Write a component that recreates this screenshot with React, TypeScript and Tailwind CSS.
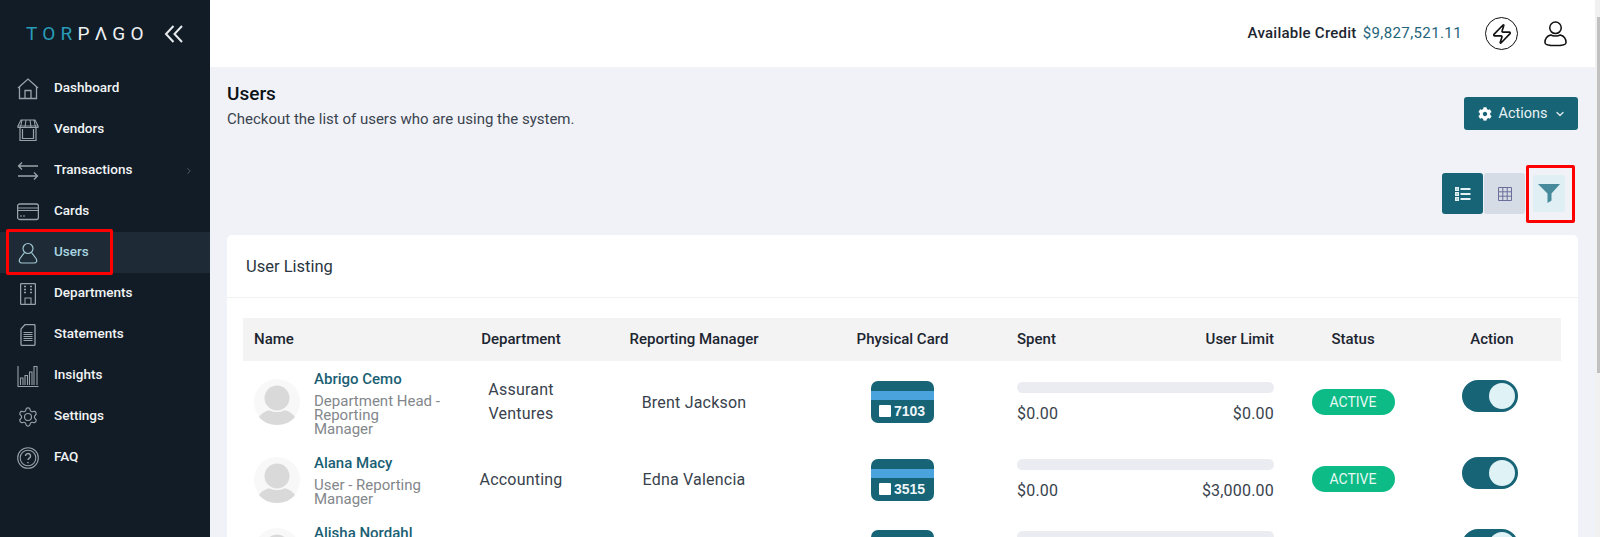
import React from "react";
import { ChevronDown, ChevronRight, Zap } from "lucide-react";
import { FaCog } from "react-icons/fa";

const ic = { fill: "none", stroke: "#98a2a9", strokeWidth: 1.1 } as const;

const icons: Record<string, React.ReactNode> = {
  Dashboard: (
    <svg width="22" height="22" viewBox="0 0 22 22" {...ic}>
      <path d="M1 10 11 1l10 9M2.500 9v11.500h17V9" strokeWidth="1.300" />
      <path d="M8 20.500v-8h6v8" strokeWidth="1.300" />
    </svg>
  ),
  Vendors: (
    <svg width="22" height="22" viewBox="0 0 22 22" {...ic}>
      <path d="M4 1h14l3 6H1zM1 7v1.500h20V7M5 1 3.500 8M9 1 8 8M13 1l1 7M17 1l1.500 7" />
      <path d="M3 9v12.500h16V9M5.500 10v9.500h11V10" strokeWidth="1.200" />
    </svg>
  ),
  Transactions: (
    <svg width="22" height="22" viewBox="0 0 22 22" {...ic}>
      <path d="M21 6H1.500M5 2.500 1.500 6 5 9.500M1 16h19.500M17 12.500l3.500 3.500-3.500 3.500" strokeWidth="1.300" />
    </svg>
  ),
  Cards: (
    <svg width="22" height="18" viewBox="0 0 22 18" {...ic}>
      <rect x="0.600" y="1" width="20.800" height="15.500" rx="2" strokeWidth="1.300" />
      <path d="M1 5h20M1 7.500h20M3 13h2M6 13h2" />
    </svg>
  ),
  Users: (
    <svg width="20" height="22" viewBox="0 0 20 22" fill="none" stroke="#9fc6d2" strokeWidth="1.200">
      <circle cx="10" cy="6.500" r="5" />
      <path d="M6.500 10.500 2 16.500C.5 19 1.500 21 4 21h12c2.500 0 3.500-2 2-4.500l-4.500-6" />
    </svg>
  ),
  Departments: (
    <svg width="16" height="22" viewBox="0 0 16 22" {...ic}>
      <rect x="0.600" y="0.600" width="14.800" height="20.800" rx="1" strokeWidth="1.300" />
      <path d="M4 3.500h2M4 6.500h2M4 9.500h2M10 3.500h2M10 6.500h2M10 9.500h2" strokeWidth="1.400" />
      <path d="M5 21v-6h6v6" />
    </svg>
  ),
  Statements: (
    <svg width="16" height="22" viewBox="0 0 16 22" {...ic}>
      <path d="M5 .6h9a1 1 0 0 1 1 1V20.400a1 1 0 0 1-1 1H2a1 1 0 0 1-1-1V5z" strokeWidth="1.300" />
      <path d="M3.500 8.500h9M3.500 10.500h9M3.500 12.500h9M3.500 14.500h9M3.500 16.500h9" strokeWidth="1" />
    </svg>
  ),
  Insights: (
    <svg width="22" height="22" viewBox="0 0 22 22" {...ic}>
      <path d="M1 1v20.500h20.500" />
      <path d="M3.500 20v-7h2.500v7M8 20v-9.500h2.500V20M12.500 20V7h2.500v13M17 20V1.500h3V20" />
    </svg>
  ),
  Settings: (
    <svg width="22" height="22" viewBox="0 0 24 24" fill="none" stroke="#98a2a9" strokeWidth="1.300">
      <path d="M9.671 4.136a2.340 2.340 0 0 1 4.659 0 2.340 2.340 0 0 0 3.319 1.915 2.340 2.340 0 0 1 2.330 4.033 2.340 2.340 0 0 0 0 3.831 2.340 2.340 0 0 1-2.330 4.033 2.340 2.340 0 0 0-3.319 1.915 2.340 2.340 0 0 1-4.659 0 2.340 2.340 0 0 0-3.320-1.915 2.340 2.340 0 0 1-2.330-4.033 2.340 2.340 0 0 0 0-3.831A2.340 2.340 0 0 1 6.350 6.051a2.340 2.340 0 0 0 3.319-1.915" />
      <circle cx="12" cy="12" r="3.800" />
    </svg>
  ),
  FAQ: (
    <svg width="22" height="22" viewBox="0 0 22 22" fill="none" stroke="#98a2a9" strokeWidth="1.100">
      <circle cx="11" cy="11" r="10.300" />
      <circle cx="11" cy="11" r="7.800" />
      <path d="M8.500 9a2.500 2.500 0 1 1 3.800 2.100c-.9.600-1.300 1-1.300 2" strokeWidth="1.500" />
      <path d="M11 15v1.300" strokeWidth="1.500" />
    </svg>
  ),
};

const nav = ["Dashboard", "Vendors", "Transactions", "Cards", "Users", "Departments", "Statements", "Insights", "Settings", "FAQ"];

function Sidebar() {
  return (
    <aside className="w-[210px] shrink-0 bg-[#111c27] h-[537px]">
      <div className="h-[67px] flex items-center pl-[26px]">
        <span className="text-[19px] tracking-[5.200px] font-normal leading-none w-[138px] whitespace-nowrap">
          <span className="text-[#2a9cb8]">TOR</span>
          <span className="text-[#eef1f2]">PΛGO</span>
        </span>
        <svg width="20" height="18" viewBox="0 0 20 18" fill="none" stroke="#e8ecee" strokeWidth="2">
          <path d="M9.500 1 2 9l7.500 8M18 1l-7.500 8 7.500 8" />
        </svg>
      </div>
      <nav className="mt-[1px]">
        {nav.map((n) => (
          <div key={n} className={`h-[41px] flex items-center relative ${n === "Users" ? "bg-[#1e2a36]" : ""}`}>
            <div className="w-[54px] flex justify-center pl-[1px] shrink-0">{icons[n]}</div>
            <span className={`text-[13.500px] font-medium pb-[2px] ${n === "Users" ? "text-[#a8d4e0]" : "text-[#f2f4f5]"}`}>{n}</span>
            {n === "Transactions" && <ChevronRight size={10} className="absolute left-[184px] text-[#5a656e]" />}
            {n === "Users" && <div className="absolute left-[6px] -top-[3px] w-[107px] h-[46px] border-[3px] border-[#ff0000] rounded-[2px]" />}
          </div>
        ))}
      </nav>
    </aside>
  );
}

function Header() {
  return (
    <header className="h-[67px] bg-white flex items-center justify-end pr-[33px] shrink-0">
      <span className="text-[15px] font-medium text-[#1c2530] tracking-[0.250px]">Available Credit</span>
      <span className="text-[15px] text-[#23647a] tracking-[0.400px] ml-[6px]">$9,827,521.11</span>
      <div className="ml-[23px] w-[33px] h-[33px] rounded-full border-[1.500px] border-[#111] flex items-center justify-center">
        <Zap size={22} strokeWidth={1.800} className="text-[#111]" />
      </div>
      <svg className="ml-[26px]" width="23" height="28" viewBox="0 0 24 28" fill="none" stroke="#111" strokeWidth="1.600">
        <circle cx="12" cy="7.500" r="6" />
        <path d="M7 15C3 16 1 19 1 23c0 2 2 3 11 3s11-1 11-3c0-4-2-7-6-8-2 1.500-8 1.500-10 0z" />
      </svg>
    </header>
  );
}

function Avatar() {
  return (
    <svg width="46" height="46" viewBox="0 0 46 46" className="shrink-0">
      <circle cx="23" cy="23" r="23" fill="#f8f8f8" />
      <circle cx="23" cy="19" r="12.500" fill="#d9d9d9" />
      <path d="M5 38c4-6 10-7 11-6.500 4 2 10 2 14 0 1-.5 7 .5 11 6.500-4 5-11 8-18 8s-14-3-18-8z" fill="#d9d9d9" />
    </svg>
  );
}

function CardChip({ num }: { num?: string }) {
  return (
    <div className="w-[63px] h-[42px] rounded-[7px] bg-[#176476] overflow-hidden pt-[10px]">
      <div className="h-[9px] bg-[#4aa3dc]" />
      <div className="flex items-center pl-[8px] mt-[3px]">
        <div className="w-[12px] h-[12px] bg-white rounded-[1px]" />
        {num && <span className="ml-[3px] text-[14px] font-bold text-[#eef6f8] leading-[16px] font-['Liberation_Sans',sans-serif]">{num}</span>}
      </div>
    </div>
  );
}

function Toggle() {
  return (
    <div className="w-[56px] h-[32px] rounded-full bg-[#176476] flex items-center justify-end pr-[3px]">
      <div className="w-[26px] h-[26px] rounded-full bg-[#dff2f6]" />
    </div>
  );
}

const cols = "grid grid-cols-[200px_156px_190px_227px_259px_156px_130px] mx-[16px] w-[1318px]";
const valueText = "text-center text-[16px] tracking-[0.200px] text-[#38424c] leading-[24px]";

type RowData = {
  name: string;
  role?: string[];
  dept?: string[];
  mgr?: string;
  card?: string;
  limit?: string;
  h: string;
  avatar: string;
  text: string;
  deptTop?: string;
  mgrTop?: string;
  chip: string;
  bar: string;
  money?: string;
  badge?: string;
  toggle: string;
};

const rows: RowData[] = [
  {
    name: "Abrigo Cemo",
    role: ["Department Head -", "Reporting", "Manager"],
    dept: ["Assurant", "Ventures"],
    mgr: "Brent Jackson",
    card: "7103",
    limit: "$0.00",
    h: "h-[82px]",
    avatar: "pt-[18px]",
    text: "pt-[8px]",
    deptTop: "pt-[17px]",
    mgrTop: "pt-[30px]",
    chip: "pt-[20px]",
    bar: "pt-[21px]",
    money: "mt-[10px]",
    badge: "pt-[28px]",
    toggle: "pt-[19px]",
  },
  {
    name: "Alana Macy",
    role: ["User - Reporting", "Manager"],
    dept: ["Accounting"],
    mgr: "Edna Valencia",
    card: "3515",
    limit: "$3,000.00",
    h: "h-[71px]",
    avatar: "pt-[14px]",
    text: "pt-[10px]",
    deptTop: "pt-[25px]",
    mgrTop: "pt-[25px]",
    chip: "pt-[16px]",
    bar: "pt-[16px]",
    money: "mt-[10px]",
    badge: "pt-[23px]",
    toggle: "pt-[14px]",
  },
  {
    name: "Alisha Nordahl",
    h: "h-[82px]",
    avatar: "pt-[14px]",
    text: "pt-[9px]",
    chip: "pt-[16px]",
    bar: "pt-[17px]",
    toggle: "pt-[15px]",
  },
];

function Row({ r }: { r: RowData }) {
  return (
    <div className={`${cols} ${r.h}`}>
      <div className="flex items-start pl-[11px]">
        <div className={r.avatar}>
          <Avatar />
        </div>
        <div className={`ml-[14px] ${r.text}`}>
          <div className="text-[15px] font-medium text-[#1b5f74] leading-[20px] whitespace-nowrap">{r.name}</div>
          {r.role && (
            <div className="text-[15px] text-[#83878b] leading-[14px] mt-[5px] whitespace-nowrap">
              {r.role.map((l) => (
                <div key={l}>{l}</div>
              ))}
            </div>
          )}
        </div>
      </div>
      <div className={`${valueText} ${r.deptTop ?? ""}`}>
        {r.dept?.map((l) => (
          <div key={l}>{l}</div>
        ))}
      </div>
      <div className={`${valueText} ${r.mgrTop ?? ""}`}>{r.mgr}</div>
      <div className={`flex justify-center ${r.chip}`}>
        <CardChip num={r.card} />
      </div>
      <div className={`px-[1px] ${r.bar}`}>
        <div className="h-[11px] rounded-full bg-[#ebecf1]" />
        {r.limit && (
          <div className={`flex justify-between ${r.money} text-[16px] tracking-[0.200px] leading-[22px] text-[#38424c]`}>
            <span>$0.00</span>
            <span>{r.limit}</span>
          </div>
        )}
      </div>
      <div className={`flex justify-center ${r.badge ?? ""}`}>
        {r.badge && <div className="w-[83px] h-[26px] pt-[1px] rounded-full bg-[#0dbb87] text-[#e6f8f2] text-[14px] flex items-center justify-center">ACTIVE</div>}
      </div>
      <div className={`flex justify-center pr-[12px] ${r.toggle}`}>
        <Toggle />
      </div>
    </div>
  );
}

export default function App() {
  return (
    <div className="flex h-[537px] w-[1600px] overflow-hidden bg-[#f1f2f8] font-['Roboto',sans-serif] relative">
      <Sidebar />
      <main className="flex-1 flex flex-col min-w-0">
        <Header />
        <div className="pl-[17px] pr-[22px] flex-1 min-h-0">
          <div className="flex justify-between h-[168px] relative">
            <div className="pt-[16px]">
              <h1 className="text-[19px] font-medium text-[#0c1218] leading-[21px]">Users</h1>
              <p className="text-[15px] text-[#3a444e] leading-[20px] mt-[5px]">Checkout the list of users who are using the system.</p>
            </div>
            <div className="flex flex-col items-end pt-[30px]">
              <button className="w-[114px] h-[33px] pl-[2px] rounded-[3px] bg-[#176476] text-[#e8f2f4] text-[14.500px] flex items-center justify-center gap-[6px]">
                <FaCog size={14} className="text-white" />
                Actions
                <ChevronDown size={12} strokeWidth={3} className="text-[#cfdfe3]" />
              </button>
              <div className="flex items-start mt-[43px] mr-[13px]">
                <div className="w-[41px] h-[41px] rounded-[3px] bg-[#176476] flex items-center justify-center">
                  <svg width="16" height="14" viewBox="0 0 16 14" fill="none" stroke="#e4f1f4">
                    <path d="M5.500 2h10M5.500 7h10M5.500 12h10" strokeWidth="2" />
                    <rect x="0.500" y="0.500" width="3" height="3" strokeWidth="1" fill="#b9d4db" />
                    <rect x="0.500" y="5.500" width="3" height="3" strokeWidth="1" fill="#b9d4db" />
                    <rect x="0.500" y="10.500" width="3" height="3" strokeWidth="1" fill="#b9d4db" />
                  </svg>
                </div>
                <div className="w-[41px] h-[41px] rounded-[3px] bg-[#d5dce5] flex items-center justify-center ml-[1px]">
                  <svg width="14" height="14" viewBox="0 0 14 14" fill="none" stroke="#6b6f9a" strokeWidth="1">
                    <path d="M.5.5h13v13H.5zM.5 4.800h13M.5 9.200h13M4.800.5v13M9.200.5v13" />
                  </svg>
                </div>
                <div className="relative w-[32px] h-[37px] ml-[8px] mt-[2px] rounded-[3px] bg-[#dfeff4] flex items-center justify-center">
                  <svg width="22" height="19" viewBox="0 0 22 19" fill="#468a9b">
                    <path d="M0 0h22l-8.500 9.500v7L9.500 19V9.500z" />
                  </svg>
                  <div className="absolute -left-[7px] -top-[10px] w-[49px] h-[58px] border-[3px] border-[#ff0000] rounded-[2px]" />
                </div>
              </div>
            </div>
          </div>
          <section className="bg-white rounded-[5px] w-[1351px] h-[400px]">
            <div className="h-[63px] flex items-center pl-[19px] pt-[3px] border-b border-[#f0f1f4] text-[16.500px] text-[#2b3640]">User Listing</div>
            <div className="pt-[20px]">
              <div className={`${cols} h-[43px] bg-[#f3f3f4] items-center text-[15px] font-medium text-[#1c2530]`}>
                <div className="pl-[11px]">Name</div>
                <div className="text-center">Department</div>
                <div className="text-center">Reporting Manager</div>
                <div className="text-center">Physical Card</div>
                <div className="flex justify-between px-[1px]">
                  <span>Spent</span>
                  <span>User Limit</span>
                </div>
                <div className="text-center">Status</div>
                <div className="text-center pr-[8px]">Action</div>
              </div>
              {rows.map((r) => (
                <Row key={r.name} r={r} />
              ))}
            </div>
          </section>
        </div>
      </main>
      <div className="absolute right-0 top-0 w-[5px] h-[537px] bg-[#f1f1f1]">
        <div className="mt-[17px] ml-[2px] h-[356px] bg-[#c1c1c1]" />
      </div>
    </div>
  );
}
